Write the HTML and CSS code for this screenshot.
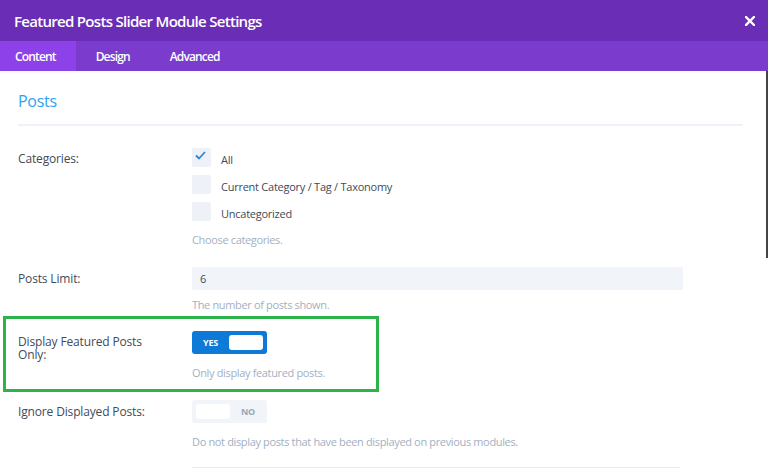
FILE: index.html
```html
<!DOCTYPE html>
<html lang="en">
<head>
    <meta charset="UTF-8">
    <meta name="viewport" content="width=device-width, initial-scale=1.0">
    <title>Featured Posts Slider Module Settings</title>
    <link rel="stylesheet" href="styles.css">
</head>
<body>
    <div class="modal">
        <header class="modal-head">
            <h1>Featured Posts Slider Module Settings</h1>
            <svg class="close" width="10" height="10" viewBox="0 0 10 10">
                <path d="M1 1 L9 9 M9 1 L1 9" stroke="#fff" stroke-width="2.4" stroke-linecap="square"/>
            </svg>
        </header>
        <nav class="tabs">
            <a href="#" class="tab active">Content</a>
            <a href="#" class="tab">Design</a>
            <a href="#" class="tab">Advanced</a>
        </nav>
        <div class="modal-body">
            <div class="scroll-thumb"></div>
            <h2 class="group-title">Posts</h2>

            <!-- Categories -->
            <div class="field field-cats">
                <label class="field-label">Categories:</label>
                <div class="field-control">
                    <div class="check-row">
                        <span class="checkbox checked">
                            <svg width="11" height="9" viewBox="0 0 11 9"><path d="M1 4.5 L4 7.5 L10 1" fill="none" stroke="#2b87da" stroke-width="1.8"/></svg>
                        </span>
                        <span class="check-text">All</span>
                    </div>
                    <div class="check-row">
                        <span class="checkbox"></span>
                        <span class="check-text">Current Category / Tag / Taxonomy</span>
                    </div>
                    <div class="check-row">
                        <span class="checkbox"></span>
                        <span class="check-text">Uncategorized</span>
                    </div>
                    <p class="desc">Choose categories.</p>
                </div>
            </div>

            <!-- Posts limit -->
            <div class="field field-limit">
                <label class="field-label">Posts Limit:</label>
                <div class="field-control">
                    <div class="text-input">6</div>
                    <p class="desc">The number of posts shown.</p>
                </div>
            </div>

            <!-- Highlighted option -->
            <div class="field field-featured">
                <label class="field-label">Display Featured Posts Only:</label>
                <div class="field-control">
                    <div class="toggle on">
                        <span class="toggle-text">YES</span>
                        <span class="knob"></span>
                    </div>
                    <p class="desc">Only display featured posts.</p>
                </div>
            </div>

            <div class="field field-ignore">
                <label class="field-label">Ignore Displayed Posts:</label>
                <div class="field-control">
                    <div class="toggle off">
                        <span class="knob"></span>
                        <span class="toggle-text">NO</span>
                    </div>
                    <p class="desc">Do not display posts that have been displayed on previous modules.</p>
                    <div class="bottom-line"></div>
                </div>
            </div>
        </div>
    </div>
</body>
</html>
```

FILE: styles.css
```css
/* Base */
body {
    margin: 0;
    font-family: "Open Sans", "Liberation Sans", sans-serif;
    background: #fff;
    color: #4c5866;
    overflow: hidden;
}
.modal {
    width: 768px;
    height: 468px;
    overflow: hidden;
}
/* Header and tabs */
.modal-head {
    height: 41px;
    background-color: #6a2db5;
    display: flex;
    align-items: center;
    justify-content: space-between;
    padding: 0 13px 0 14px;
}
.modal-head h1 {
    margin: 0;
    color: #fff;
    font-size: 15px;
    font-weight: 600;
    letter-spacing: -0.7px;
}
.close {
    display: block;
}
.tabs {
    height: 30px;
    background-color: #7b3bcc;
    display: flex;
}
.tab {
    display: flex;
    align-items: center;
    padding: 0 20px;
    color: #fff;
    text-decoration: none;
    font-size: 12px;
    font-weight: 600;
    letter-spacing: -0.85px;
}
.tab.active {
    background-color: #8d41e8;
    padding-left: 15px;
}
/* Body */
.modal-body {
    position: relative;
    padding: 0 25px 0 18px;
}
.scroll-thumb {
    position: absolute;
    right: 0;
    top: 0;
    width: 2px;
    height: 187px;
    background-color: #444;
}
.group-title {
    margin: 0;
    padding: 20px 0 13px;
    font-size: 16px;
    font-weight: 400;
    color: #2ea3f2;
    letter-spacing: -0.3px;
    line-height: 20px;
    border-bottom: 2px solid #eef2f8;
}
.field {
    display: flex;
}
.field-label {
    width: 174px;
    flex-shrink: 0;
    font-size: 12px;
    letter-spacing: -0.15px;
    line-height: 13px;
    color: #3f4b59;
}
.field-control {
    flex: 1;
}
.desc {
    margin: 0;
    font-size: 11px;
    letter-spacing: -0.35px;
    color: #a3b0c2;
    line-height: 14px;
}
/* Categories */
.field-cats {
    padding-top: 22px;
}
.field-cats .field-label {
    padding-top: 4px;
}
.check-row {
    display: flex;
    align-items: center;
    height: 19px;
    margin-bottom: 8px;
}
.checkbox {
    width: 19px;
    height: 19px;
    border-radius: 2px;
    background-color: #eef1f7;
    display: flex;
    align-items: center;
    justify-content: center;
    margin-right: 10px;
}
.checkbox.checked svg {
    margin: -4px 3px 0 0;
}
.check-text {
    font-size: 11px;
    letter-spacing: -0.25px;
    color: #3f4b59;
    padding-top: 3px;
}
.field-cats .desc {
    margin-top: 12px;
}
/* Posts limit */
.field-limit {
    padding-top: 20px;
}
.field-limit .field-label {
    padding-top: 5px;
}
.text-input {
    width: 483px;
    height: 23px;
    background-color: #f1f4f9;
    border-radius: 2px;
    padding-left: 8px;
    font-size: 11px;
    line-height: 23px;
    color: #3f4b59;
}
.field-limit .desc {
    margin-top: 8px;
}
/* Highlight box */
.field-featured {
    margin: 4px 0 0 -15px;
    padding: 12px 0 9px 12px;
    width: 376px;
    box-sizing: border-box;
    border: 3px solid #2db34a;
}
.field-featured .field-label {
    width: 174px;
    padding-top: 4px;
    box-sizing: border-box;
    padding-right: 30px;
}
.field-featured .desc {
    margin-top: 12px;
}
/* Toggles */
.toggle {
    width: 75px;
    height: 23px;
    border-radius: 3px;
    display: flex;
    align-items: center;
    box-sizing: border-box;
    padding: 0 4px;
}
.toggle.on {
    background-color: #0c7ad6;
    justify-content: space-between;
}
.toggle.off {
    background-color: #f1f4f9;
}
.knob {
    width: 34px;
    height: 15px;
    background-color: #fff;
    border-radius: 3px;
}
.toggle-text {
    font-size: 9px;
    font-weight: 700;
    letter-spacing: -0.2px;
}
.toggle.on .toggle-text {
    color: #fff;
    padding-left: 7px;
}
.toggle.off .toggle-text {
    color: #9aa5b4;
    padding-left: 11px;
}
.field-ignore {
    padding-top: 8px;
}
.field-ignore .field-label {
    padding-top: 5px;
}
.field-ignore .desc {
    margin-top: 12px;
}
.bottom-line {
    width: 488px;
    height: 1px;
    background-color: #e8ecf2;
    margin-top: 18px;
}
```
